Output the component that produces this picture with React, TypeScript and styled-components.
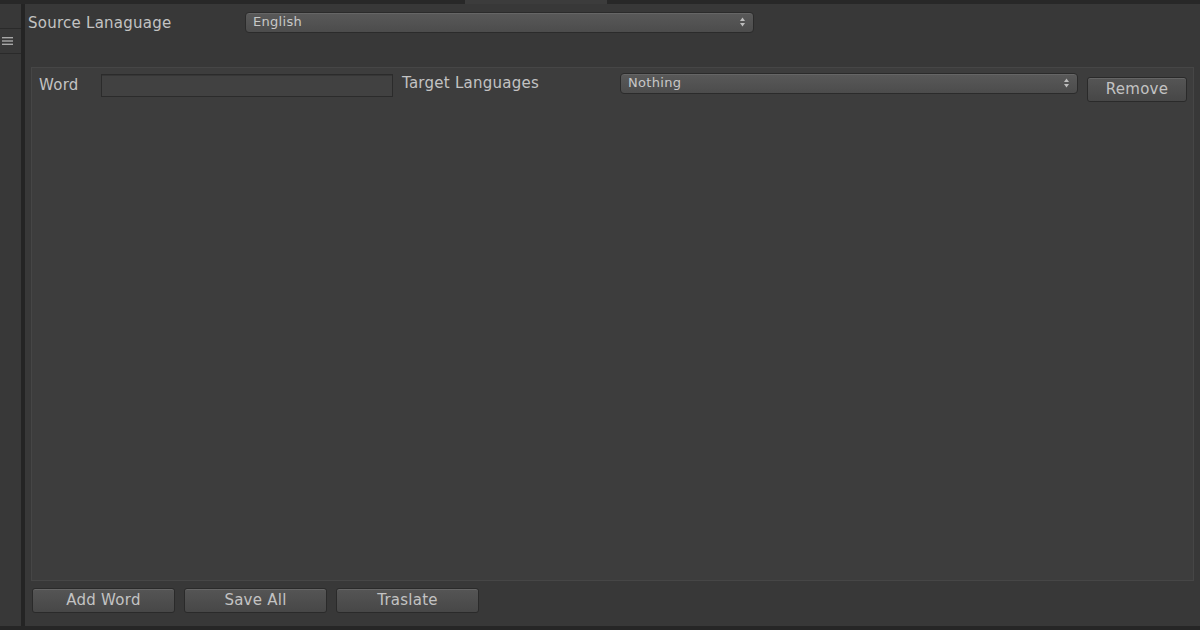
import React from 'react'
import styled, { createGlobalStyle } from 'styled-components'

const GlobalStyle = createGlobalStyle`
  html, body {
    margin: 0;
    padding: 0;
    background: #383838;
  }
  * {
    box-sizing: border-box;
  }
`

const font = `"DejaVu Sans", "Liberation Sans", sans-serif`

const Window = styled.div`
  width: 1200px;
  height: 630px;
  display: flex;
  flex-direction: column;
  background: #383838;
  font-family: ${font};
  color: #c3c3c3;
  overflow: hidden;
`

const TabStrip = styled.div`
  height: 4px;
  display: flex;
  background: #282828;
`

const TabStub = styled.div<{ width: number; offset: number }>`
  width: ${({ width }) => width}px;
  margin-left: ${({ offset }) => offset}px;
  background: #3c3c3c;
`

const Body = styled.div`
  flex: 1;
  display: flex;
  min-height: 0;
`

const Sidebar = styled.div`
  width: 21px;
  display: flex;
  flex-direction: column;
  background: #383838;
`

const SideCell = styled.div`
  height: 25px;
  display: flex;
  align-items: center;
  padding-left: 2px;
  border-bottom: 1px solid #2a2a2a;
`

const Divider = styled.div`
  width: 4px;
  background: #242424;
`

const Main = styled.div`
  flex: 1;
  display: flex;
  flex-direction: column;
  padding: 8px 6px 0 6px;
`

const SourceRow = styled.div`
  display: flex;
  align-items: center;
  height: 21px;
  margin-left: -3px;
`

const Label = styled.div<{ width: number }>`
  width: ${({ width }) => width}px;
  flex-shrink: 0;
  font-size: 15px;
  letter-spacing: 0.25px;
  white-space: nowrap;
`

const Dropdown = styled.div<{ width?: number }>`
  ${({ width }) => (width ? `width: ${width}px;` : 'flex: 1;')}
  height: 21px;
  display: flex;
  align-items: center;
  justify-content: space-between;
  padding: 0 7px 2px 7px;
  border: 1px solid #2b2b2b;
  border-radius: 4px;
  background: linear-gradient(#595959, #4c4c4c);
  box-shadow: inset 0 1px 0 rgba(255, 255, 255, 0.08);
  font-size: 13px;
  letter-spacing: 0.3px;
  color: #c8c8c8;
`

const Box = styled.div`
  margin-top: 34px;
  height: 514px;
  background: #3d3d3d;
  border: 1px solid #464646;
  padding: 6px 6px 0 7px;
`

const EntryRow = styled.div`
  display: flex;
  align-items: flex-start;
`

const TextField = styled.div`
  width: 292px;
  height: 23px;
  flex-shrink: 0;
  margin-right: 9px;
  background: #414141;
  border: 1px solid #2b2b2b;
  box-shadow: inset 0 1px 0 #363636;
`

const EntryLabel = styled(Label)<{ top: number }>`
  padding-top: ${({ top }) => top}px;
`

const Button = styled.div<{ width: number; top?: number; left?: number }>`
  width: ${({ width }) => width}px;
  height: 25px;
  flex-shrink: 0;
  margin-top: ${({ top }) => top ?? 0}px;
  margin-left: ${({ left }) => left ?? 0}px;
  display: flex;
  align-items: center;
  justify-content: center;
  padding-bottom: 2px;
  border: 1px solid #2a2a2a;
  border-radius: 3px;
  background: linear-gradient(#555555, #474747);
  box-shadow: inset 0 1px 0 rgba(255, 255, 255, 0.1);
  font-size: 15px;
  letter-spacing: 0.25px;
  color: #c3c3c3;
`

const ButtonRow = styled.div`
  display: flex;
  gap: 9px;
  margin-top: 7px;
  padding-left: 1px;
`

const Footer = styled.div`
  height: 4px;
  background: #262626;
`

const Arrows = () => (
  <svg width="7" height="12" viewBox="0 0 7 12">
    <path d="M3.5 1.5 L6 5 L1 5 Z" fill="#bdbdbd" />
    <path d="M3.5 10.5 L6 7 L1 7 Z" fill="#bdbdbd" />
  </svg>
)

const MenuIcon = () => (
  <svg width="12" height="10" viewBox="0 0 12 10">
    <rect x="0" y="1" width="11" height="1.4" fill="#a8a8a8" />
    <rect x="0" y="4.3" width="11" height="1.4" fill="#a8a8a8" />
    <rect x="0" y="7.6" width="11" height="1.4" fill="#a8a8a8" />
  </svg>
)

const App: React.FC = () => (
  <>
    <GlobalStyle />
    <Window>
      <TabStrip>
        <TabStub width={142} offset={465} />
      </TabStrip>
      <Body>
        <Sidebar>
          <SideCell />
          <SideCell>
            <MenuIcon />
          </SideCell>
        </Sidebar>
        <Divider />
        <Main>
          <SourceRow>
            <Label width={217}>Source Lanaguage</Label>
            <Dropdown width={509}>
              <span>English</span>
              <Arrows />
            </Dropdown>
          </SourceRow>

          <Box>
            <EntryRow>
              <EntryLabel width={62} top={2}>
                Word
              </EntryLabel>
              <TextField />
              <EntryLabel width={218} top={0}>
                Target Languages
              </EntryLabel>
              <Dropdown style={{ marginTop: -1 }}>
                <span>Nothing</span>
                <Arrows />
              </Dropdown>
              <Button width={100} top={3} left={9}>
                Remove
              </Button>
            </EntryRow>
          </Box>

          <ButtonRow>
            <Button width={143}>Add Word</Button>
            <Button width={143}>Save All</Button>
            <Button width={143}>Traslate</Button>
          </ButtonRow>
        </Main>
      </Body>
      <Footer />
    </Window>
  </>
)

export default App
